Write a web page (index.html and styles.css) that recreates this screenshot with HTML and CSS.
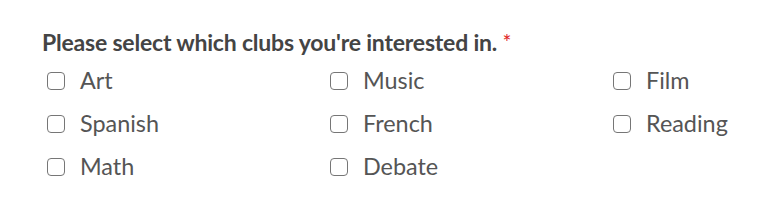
FILE: index.html
```html
<!DOCTYPE html>
<html lang="en">
<head>
  <meta charset="UTF-8">
  <title>Clubs</title>
  <link rel="stylesheet" href="styles.css">
</head>
<body>
  <div class="field">
    <div class="field-label">Please select which clubs you're interested in. <span class="required">*</span></div>
    <div class="options">
      <label class="option"><input type="checkbox"><span class="box"></span>Art</label>
      <label class="option"><input type="checkbox"><span class="box"></span>Music</label>
      <label class="option"><input type="checkbox"><span class="box"></span>Film</label>
      <label class="option"><input type="checkbox"><span class="box"></span>Spanish</label>
      <label class="option"><input type="checkbox"><span class="box"></span>French</label>
      <label class="option"><input type="checkbox"><span class="box"></span>Reading</label>
      <label class="option"><input type="checkbox"><span class="box"></span>Math</label>
      <label class="option"><input type="checkbox"><span class="box"></span>Debate</label>
    </div>
  </div>
</body>
</html>
```

FILE: styles.css
```css
body {
  margin: 0;
  background: #fff;
  font-family: Lato, "Open Sans", sans-serif;
  color: #555;
}

.field {
  padding: 28px 0 0 42px;
}

.field-label {
  font-size: 23px;
  line-height: 28px;
  font-weight: 700;
  color: #444;
  letter-spacing: -0.2px;
}

.required {
  color: #e02424;
  font-weight: 400;
  font-size: 21px;
  vertical-align: top;
}

.options {
  display: grid;
  grid-template-columns: 283px 283px 1fr;
  row-gap: 14px;
  margin-top: 10px;
}

.option {
  display: flex;
  align-items: center;
  font-size: 23.4px;
  line-height: 29px;
  cursor: pointer;
}

.option input {
  display: none;
}

.box {
  display: block;
  flex: 0 0 18px;
  box-sizing: border-box;
  width: 18px;
  height: 18px;
  border: 1.7px solid #767676;
  border-radius: 4px;
  margin: 0 15px 0 5px;
}
```
